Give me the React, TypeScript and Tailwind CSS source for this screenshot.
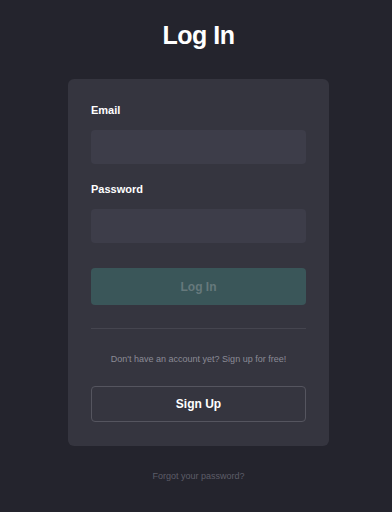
import React, { useState } from "react";

const LoginPage: React.FC = () => {
  const [email, setEmail] = useState("");
  const [password, setPassword] = useState("");

  const canSubmit = email.trim() !== "" && password.trim() !== "";

  return (
    <div className="min-h-screen bg-[#24242d] font-['Liberation_Sans',Arial,sans-serif] text-white">
      <div className="flex flex-col items-center pt-[19px] pb-8 pl-[5px]">
        <h1 className="text-[25px] font-bold leading-[32px] tracking-[-0.5px]">Log In</h1>

        <div className="mt-[28px] w-[261px] rounded-[6px] bg-[#35353f] px-[23px] pt-[24px] pb-[24px]">
          <label className="block text-[11px] font-bold leading-[14px]">Email</label>
          <input
            type="email"
            value={email}
            onChange={(event) => setEmail(event.target.value)}
            className="mt-[13px] block h-[34px] w-full rounded-[4px] bg-[#3d3d49] px-3 text-[12px] text-white outline-none"
          />

          <label className="mt-[18px] block text-[11px] font-bold leading-[14px]">
            Password
          </label>
          <input
            type="password"
            value={password}
            onChange={(event) => setPassword(event.target.value)}
            className="mt-[13px] block h-[34px] w-full rounded-[4px] bg-[#3d3d49] px-3 text-[12px] text-white outline-none"
          />

          <button
            type="button"
            disabled={!canSubmit}
            className="mt-[25px] block h-[37px] w-full rounded-[4px] bg-[#3a5659] text-[12px] font-bold text-[#66797c]"
          >
            Log In
          </button>

          <div className="mt-[23px] h-px w-full bg-[#45454f]" />

          <p className="mt-[24px] text-center text-[9px] leading-[12px] text-[#8b8b96]">
            Don't have an account yet? Sign up for free!
          </p>

          <button
            type="button"
            className="mt-[21px] block h-[36px] w-full rounded-[4px] border border-[#55555f] text-[12px] font-bold text-white"
          >
            Sign Up
          </button>
        </div>

        <a href="#" className="mt-[24px] text-[9px] leading-[12px] text-[#5d5d68]">
          Forgot your password?
        </a>
      </div>
    </div>
  );
};

export default function App() {
  return <LoginPage />;
}
